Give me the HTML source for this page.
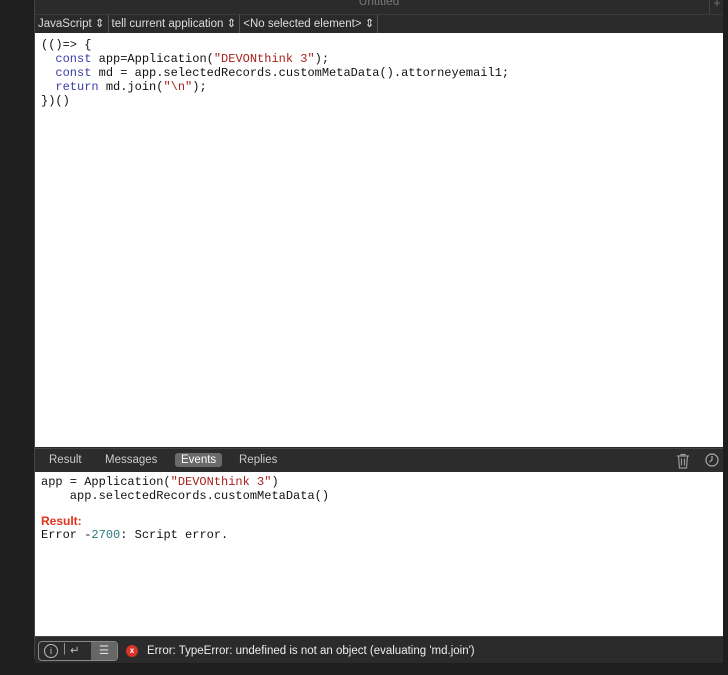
<!DOCTYPE html>
<html><head><style>
body{margin:0;width:728px;height:675px;background:#1e1e1e;position:relative;overflow:hidden;font-family:"Liberation Sans",sans-serif}
.win{position:absolute;left:34px;top:0;width:688px;height:662px;background:#2b2b2b;border-left:1px solid #444;border-bottom-left-radius:6px}
.title{position:absolute;left:0;top:-6px;width:688px;text-align:center;color:#777;font-size:12px}
.tb{position:absolute;left:0;top:14px;width:688px;height:19px;background:#2a2a2a;border-top:1px solid #3a3a3a;color:#ddd;font-size:11.5px;line-height:19px}
.tb span{display:inline-block;padding:0 3px;border-right:1px solid #555}
.ed{position:absolute;left:0;top:33px;width:688px;height:414px;background:#fff}
pre{margin:0;font-family:"Liberation Mono",monospace;font-size:12px;line-height:14px;color:#111}
.k{color:#3b3ba8}.s{color:#a8211b}.n{color:#2b7a80}
.tabs{position:absolute;left:0;top:448px;width:688px;height:24px;background:#2c2c2c;border-top:1px solid #444;color:#ccc;font-size:11.5px}
.tabs span{position:absolute;top:5px}
.res{position:absolute;left:0;top:472px;width:688px;height:164px;background:#fff}
.bot{position:absolute;left:0;top:636px;width:688px;height:26px;background:#2b2b2b;border-top:1px solid #444;color:#eee;font-size:11.5px}
</style></head><body>
<div class="win">
<div class="title">Untitled</div>
<div style="position:absolute;left:674px;top:0;width:14px;height:14px;border-left:1px solid #444;color:#777;font-size:12px;line-height:6px;text-align:center">+</div>
<div class="tb"><span>JavaScript ⇕</span><span>tell current application ⇕</span><span>&lt;No selected element&gt; ⇕</span></div>
<div class="ed"><pre style="padding:5px 0 0 6px">(()=&gt; {
  <span class="k">const</span> app=Application(<span class="s">"DEVONthink 3"</span>);
  <span class="k">const</span> md = app.selectedRecords.customMetaData().attorneyemail1;
  <span class="k">return</span> md.join(<span class="s">"\n"</span>);
})()</pre></div>
<div class="tabs"><span style="left:14px">Result</span><span style="left:70px">Messages</span>
<span style="left:140px;top:4px;background:#6a6a6a;color:#fff;padding:1px 6px;border-radius:3px">Events</span>
<span style="left:204px">Replies</span>
<svg style="position:absolute;left:641px;top:4px" width="14" height="16" viewBox="0 0 14 16" fill="none" stroke="#999" stroke-width="1.2"><path d="M1 3h12M5 3V1.5h4V3M2.5 3l1 12h7l1-12M5.5 5.5v7M8.5 5.5v7"/></svg>
<svg style="position:absolute;left:670px;top:4px" width="14" height="14" viewBox="0 0 14 14" fill="none" stroke="#aaa" stroke-width="1.2"><circle cx="7" cy="7" r="6"/><path d="M7 3v4L4.5 9"/></svg></div>
<div class="res"><pre style="padding:3px 0 0 6px">app = Application(<span class="s">"DEVONthink 3"</span>)
    app.selectedRecords.customMetaData()
</pre>
<div style="padding:11px 0 0 6px;color:#e0311c;font-weight:bold;font-size:12px;line-height:14px">Result:</div>
<pre style="padding-left:6px">Error -<span class="n">2700</span>: Script error.</pre></div>
<div class="bot">
<div style="position:absolute;left:3px;top:4px;width:78px;height:18px;border:1px solid #888;border-radius:4px;overflow:hidden">
<span style="position:absolute;left:5px;top:2px;width:12px;height:12px;border:1px solid #bbb;border-radius:50%;font-size:9px;text-align:center;line-height:12px;color:#ccc">i</span>
<span style="position:absolute;left:24px;top:1px;color:#999">|</span>
<span style="position:absolute;left:31px;top:1px;color:#bbb">↵</span>
<div style="position:absolute;left:52px;top:0;width:26px;height:18px;background:#666;color:#ddd;text-align:center;line-height:18px">☰</div></div>
<div style="position:absolute;left:91px;top:8px;width:12px;height:12px;border-radius:50%;background:#d9332a;color:#fff;font-size:8px;text-align:center;line-height:12px;font-weight:bold">x</div>
<span style="position:absolute;left:112px;top:8px">Error: TypeError: undefined is not an object (evaluating 'md.join')</span>
</div>
</div>
</body></html>
